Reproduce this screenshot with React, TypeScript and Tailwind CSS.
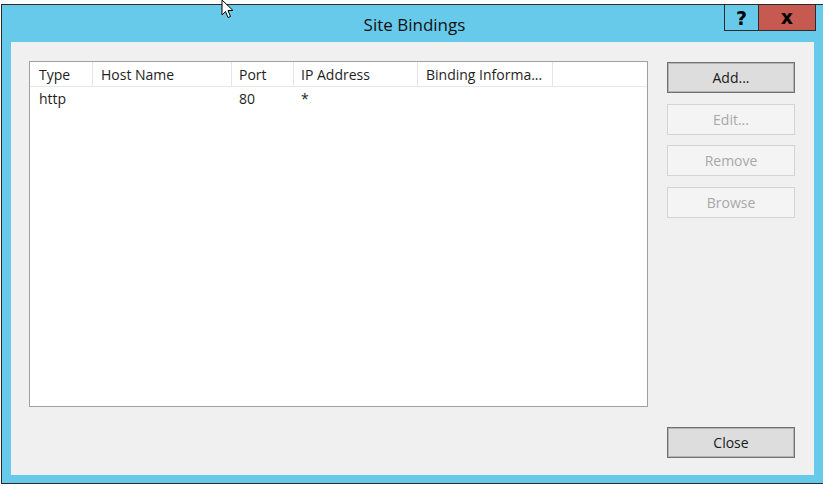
import React from "react";

const cols = [
  { label: "Type", w: "w-[63px]", pl: "pl-[9px]" },
  { label: "Host Name", w: "w-[139px]", pl: "pl-[8px]" },
  { label: "Port", w: "w-[62px]", pl: "pl-[7px]" },
  { label: "IP Address", w: "w-[124px]", pl: "pl-[7px]" },
  { label: "Binding Informa...", w: "w-[135px]", pl: "pl-[8px]" },
];

function Btn({ label, enabled, className = "" }: { label: string; enabled?: boolean; className?: string }) {
  return (
    <div
      className={
        "w-[128px] h-[31px] flex items-center justify-center text-[14px] " +
        (enabled
          ? "bg-[#dddddd] border border-[#707070] shadow-[inset_0_0_0_1px_#b4b4b4] text-[#1a1a1a] "
          : "bg-[#f4f4f4] border border-[#d4d4d4] text-[#a8a8a8] ") +
        className
      }
    >
      {label}
    </div>
  );
}

export default function App() {
  return (
    <div
      className="relative w-[823px] h-[486px] bg-white overflow-hidden"
      style={{ fontFamily: '"Open Sans", "Noto Sans", sans-serif' }}
    >
      <div className="ml-[1px] mt-[4px] w-[823px] h-[480px] bg-[#68caea] border-t border-l border-b border-[#2b2b2b] flex flex-col">
        {/* Title bar */}
        <div className="relative h-[37px] flex items-center justify-center">
          <span className="text-[17px] text-[#111] mt-[2px] ml-[3px]">Site Bindings</span>
          <div className="absolute top-0 left-[722px] flex h-[26px]">
            <div className="w-[35px] h-[26px] border-l border-b border-r border-[#2b2b2b] flex items-center justify-center text-[19px] font-bold text-black leading-none pt-[1px]" style={{ fontFamily: '"DejaVu Sans", sans-serif' }}>
              ?
            </div>
            <div className="w-[57px] h-[26px] bg-[#c75a50] border-b border-r border-[#2b2b2b] flex items-center justify-center text-[19px] font-bold text-black leading-none" style={{ fontFamily: '"DejaVu Sans", sans-serif' }}>
              x
            </div>
          </div>
        </div>
        {/* Client area */}
        <div className="ml-[9px] w-[803px] h-[433px] bg-[#f0f0f0] pl-[18px] pt-[19px] flex flex-col">
          <div className="flex">
            <div className="w-[619px] h-[346px] bg-white border border-[#a0a0a0] flex flex-col">
              <div className="flex h-[25px] border-b border-[#e8e8e8]">
                {cols.map((c) => (
                  <div
                    key={c.label}
                    className={c.w + " " + c.pl + " h-full border-r border-[#e5e5e5] flex items-center text-[14px] text-[#1e1e1e] whitespace-nowrap"}
                  >
                    {c.label}
                  </div>
                ))}
              </div>
              <div className="flex h-[23px] items-center text-[14px] text-[#1e1e1e]">
                <div className="w-[63px] pl-[9px]">http</div>
                <div className="w-[139px]"></div>
                <div className="w-[62px] pl-[7px]">80</div>
                <div className="w-[124px] pl-[7px]">*</div>
              </div>
            </div>
            <div className="ml-[19px] mt-[1px] flex flex-col">
              <Btn label="Add..." enabled />
              <Btn label="Edit..." className="mt-[11px]" />
              <Btn label="Remove" className="mt-[10px]" />
              <Btn label="Browse" className="mt-[11px]" />
            </div>
          </div>
          <div className="flex justify-end pr-[19px] mt-[20px]">
            <Btn label="Close" enabled />
          </div>
        </div>
      </div>
      {/* mouse cursor */}
      <svg className="absolute left-[221px] top-[-1px]" width="14" height="20" viewBox="0 0 14 20">
        <path d="M1 1 L1 16 L4.5 12.5 L7 18.5 L9.5 17.5 L7 11.5 L12 11.5 Z" fill="white" stroke="black" strokeWidth="1" />
      </svg>
    </div>
  );
}
